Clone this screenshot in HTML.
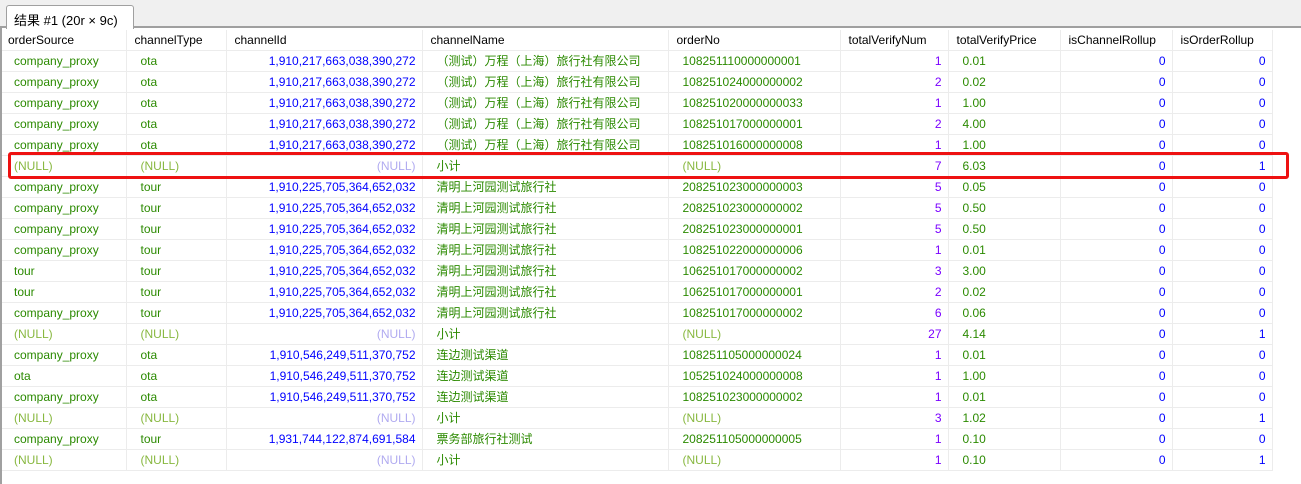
<!DOCTYPE html><html><head><meta charset="utf-8"><style>
body{margin:0;width:1301px;height:484px;background:#fff;position:relative;overflow:hidden;font-family:"Liberation Sans","Noto Sans CJK SC",sans-serif;font-size:12px}
.top{position:absolute;left:0;top:0;width:1301px;height:28px;background:#f0f0f0;border-bottom:2px solid #a0a0a0;box-sizing:border-box}
.tab{position:absolute;left:6px;top:5px;width:128px;height:24px;background:#fff;border:1px solid #a0a0a0;border-bottom:none;border-radius:3px 3px 0 0;box-sizing:border-box;padding:4px 0 0 7px;font-size:13px;color:#000}
.frame{position:absolute;left:0;top:28px;width:2px;height:456px;background:#a0a0a0;z-index:2}
table{position:absolute;left:0;top:30px;border-collapse:collapse;table-layout:fixed}
td{height:20px;padding:0 6px;border-right:1px solid #ececec;border-bottom:1px solid #ececec;white-space:nowrap;overflow:hidden;line-height:20px}
th{height:20px;padding:0 6px 0 8px;font-weight:normal;text-align:left;border-right:1px solid #ececec;border-bottom:1px solid #ececec;color:#000;line-height:20px}
td.g{color:#2b8a00;padding-left:14px}
td.b{color:#0000ff;text-align:right}
td.p{color:#7a00ff;text-align:right}
td.n{color:#88b840}
td.l{color:#b0aaf0;text-align:right}
.box{position:absolute;left:8px;top:152px;width:1281px;height:27px;border:3px solid #ee1111;border-radius:3px;box-sizing:border-box}
</style></head><body>
<div class="top"><div class="tab">结果 #1 (20r × 9c)</div></div>
<table>
<colgroup><col style="width:126px"><col style="width:100px"><col style="width:196px"><col style="width:246px"><col style="width:172px"><col style="width:108px"><col style="width:112px"><col style="width:112px"><col style="width:100px"></colgroup>
<tr><th>orderSource</th><th>channelType</th><th>channelId</th><th>channelName</th><th>orderNo</th><th>totalVerifyNum</th><th>totalVerifyPrice</th><th>isChannelRollup</th><th>isOrderRollup</th></tr>
<tr><td class="g">company_proxy</td><td class="g">ota</td><td class="b">1,910,217,663,038,390,272</td><td class="g">（测试）万程（上海）旅行社有限公司</td><td class="g">108251110000000001</td><td class="p">1</td><td class="g">0.01</td><td class="b">0</td><td class="b">0</td></tr>
<tr><td class="g">company_proxy</td><td class="g">ota</td><td class="b">1,910,217,663,038,390,272</td><td class="g">（测试）万程（上海）旅行社有限公司</td><td class="g">108251024000000002</td><td class="p">2</td><td class="g">0.02</td><td class="b">0</td><td class="b">0</td></tr>
<tr><td class="g">company_proxy</td><td class="g">ota</td><td class="b">1,910,217,663,038,390,272</td><td class="g">（测试）万程（上海）旅行社有限公司</td><td class="g">108251020000000033</td><td class="p">1</td><td class="g">1.00</td><td class="b">0</td><td class="b">0</td></tr>
<tr><td class="g">company_proxy</td><td class="g">ota</td><td class="b">1,910,217,663,038,390,272</td><td class="g">（测试）万程（上海）旅行社有限公司</td><td class="g">108251017000000001</td><td class="p">2</td><td class="g">4.00</td><td class="b">0</td><td class="b">0</td></tr>
<tr><td class="g">company_proxy</td><td class="g">ota</td><td class="b">1,910,217,663,038,390,272</td><td class="g">（测试）万程（上海）旅行社有限公司</td><td class="g">108251016000000008</td><td class="p">1</td><td class="g">1.00</td><td class="b">0</td><td class="b">0</td></tr>
<tr><td class="g n">(NULL)</td><td class="g n">(NULL)</td><td class="l">(NULL)</td><td class="g">小计</td><td class="g n">(NULL)</td><td class="p">7</td><td class="g">6.03</td><td class="b">0</td><td class="b">1</td></tr>
<tr><td class="g">company_proxy</td><td class="g">tour</td><td class="b">1,910,225,705,364,652,032</td><td class="g">清明上河园测试旅行社</td><td class="g">208251023000000003</td><td class="p">5</td><td class="g">0.05</td><td class="b">0</td><td class="b">0</td></tr>
<tr><td class="g">company_proxy</td><td class="g">tour</td><td class="b">1,910,225,705,364,652,032</td><td class="g">清明上河园测试旅行社</td><td class="g">208251023000000002</td><td class="p">5</td><td class="g">0.50</td><td class="b">0</td><td class="b">0</td></tr>
<tr><td class="g">company_proxy</td><td class="g">tour</td><td class="b">1,910,225,705,364,652,032</td><td class="g">清明上河园测试旅行社</td><td class="g">208251023000000001</td><td class="p">5</td><td class="g">0.50</td><td class="b">0</td><td class="b">0</td></tr>
<tr><td class="g">company_proxy</td><td class="g">tour</td><td class="b">1,910,225,705,364,652,032</td><td class="g">清明上河园测试旅行社</td><td class="g">108251022000000006</td><td class="p">1</td><td class="g">0.01</td><td class="b">0</td><td class="b">0</td></tr>
<tr><td class="g">tour</td><td class="g">tour</td><td class="b">1,910,225,705,364,652,032</td><td class="g">清明上河园测试旅行社</td><td class="g">106251017000000002</td><td class="p">3</td><td class="g">3.00</td><td class="b">0</td><td class="b">0</td></tr>
<tr><td class="g">tour</td><td class="g">tour</td><td class="b">1,910,225,705,364,652,032</td><td class="g">清明上河园测试旅行社</td><td class="g">106251017000000001</td><td class="p">2</td><td class="g">0.02</td><td class="b">0</td><td class="b">0</td></tr>
<tr><td class="g">company_proxy</td><td class="g">tour</td><td class="b">1,910,225,705,364,652,032</td><td class="g">清明上河园测试旅行社</td><td class="g">108251017000000002</td><td class="p">6</td><td class="g">0.06</td><td class="b">0</td><td class="b">0</td></tr>
<tr><td class="g n">(NULL)</td><td class="g n">(NULL)</td><td class="l">(NULL)</td><td class="g">小计</td><td class="g n">(NULL)</td><td class="p">27</td><td class="g">4.14</td><td class="b">0</td><td class="b">1</td></tr>
<tr><td class="g">company_proxy</td><td class="g">ota</td><td class="b">1,910,546,249,511,370,752</td><td class="g">连边测试渠道</td><td class="g">108251105000000024</td><td class="p">1</td><td class="g">0.01</td><td class="b">0</td><td class="b">0</td></tr>
<tr><td class="g">ota</td><td class="g">ota</td><td class="b">1,910,546,249,511,370,752</td><td class="g">连边测试渠道</td><td class="g">105251024000000008</td><td class="p">1</td><td class="g">1.00</td><td class="b">0</td><td class="b">0</td></tr>
<tr><td class="g">company_proxy</td><td class="g">ota</td><td class="b">1,910,546,249,511,370,752</td><td class="g">连边测试渠道</td><td class="g">108251023000000002</td><td class="p">1</td><td class="g">0.01</td><td class="b">0</td><td class="b">0</td></tr>
<tr><td class="g n">(NULL)</td><td class="g n">(NULL)</td><td class="l">(NULL)</td><td class="g">小计</td><td class="g n">(NULL)</td><td class="p">3</td><td class="g">1.02</td><td class="b">0</td><td class="b">1</td></tr>
<tr><td class="g">company_proxy</td><td class="g">tour</td><td class="b">1,931,744,122,874,691,584</td><td class="g">票务部旅行社测试</td><td class="g">208251105000000005</td><td class="p">1</td><td class="g">0.10</td><td class="b">0</td><td class="b">0</td></tr>
<tr><td class="g n">(NULL)</td><td class="g n">(NULL)</td><td class="l">(NULL)</td><td class="g">小计</td><td class="g n">(NULL)</td><td class="p">1</td><td class="g">0.10</td><td class="b">0</td><td class="b">1</td></tr>
</table>
<div class="frame"></div>
<div class="box"></div>
</body></html>
